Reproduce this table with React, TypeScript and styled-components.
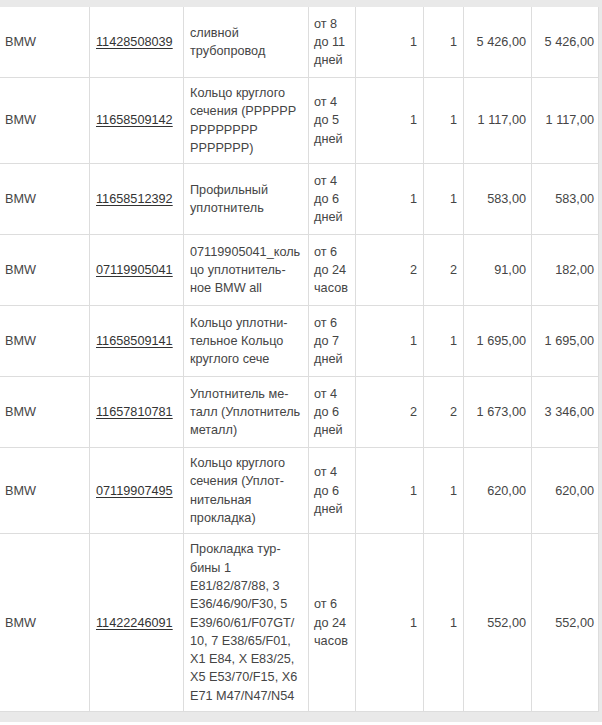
import React from "react";
import styled, { createGlobalStyle } from "styled-components";

const GlobalStyle = createGlobalStyle`
  html, body {
    margin: 0;
    padding: 0;
    background: #ffffff;
  }
  body {
    font-family: "Liberation Sans", Arial, sans-serif;
  }
`;

const Frame = styled.div`
  background: #e9e9e9;
  padding: 7px 3px 10px 0;
  width: 599px;
`;

const Table = styled.table`
  width: 599px;
  table-layout: fixed;
  border-collapse: separate;
  border-spacing: 0;
  background: #ffffff;
  font-family: "Liberation Sans", Arial, sans-serif;
  font-size: 12.7px;
  line-height: 18.3px;
  color: #454545;
`;

const Cell = styled.td<{ $align?: "left" | "right"; $padR?: number; $padL?: number }>`
  box-sizing: border-box;
  height: 71px;
  padding: 6px ${(p) => p.$padR ?? 6}px 6px ${(p) => p.$padL ?? 6}px;
  border-right: 1px solid #dddddd;
  border-bottom: 1px solid #dddddd;
  vertical-align: middle;
  text-align: ${(p) => p.$align ?? "left"};
  white-space: nowrap;
`;

const PartLink = styled.a`
  color: #333333;
  text-decoration: underline;
  text-underline-offset: 2px;
`;

const Lines = styled.span`
  display: block;
`;

type Row = {
  brand: string;
  code: string;
  name: string[];
  term: string[];
  qty: number;
  qty2: number;
  price: string;
  sum: string;
};

const rows: Row[] = [
  {
    brand: "BMW",
    code: "11428508039",
    name: ["сливной", "трубопровод"],
    term: ["от 8", "до 11", "дней"],
    qty: 1,
    qty2: 1,
    price: "5\u00a0426,00",
    sum: "5\u00a0426,00",
  },
  {
    brand: "BMW",
    code: "11658509142",
    name: ["Кольцо круглого", "сечения (PPPPPP", "PPPPPPPP", "PPPPPPP)"],
    term: ["от 4", "до 5", "дней"],
    qty: 1,
    qty2: 1,
    price: "1\u00a0117,00",
    sum: "1\u00a0117,00",
  },
  {
    brand: "BMW",
    code: "11658512392",
    name: ["Профильный", "уплотнитель"],
    term: ["от 4", "до 6", "дней"],
    qty: 1,
    qty2: 1,
    price: "583,00",
    sum: "583,00",
  },
  {
    brand: "BMW",
    code: "07119905041",
    name: ["07119905041_коль", "цо уплотнитель-", "ное BMW all"],
    term: ["от 6", "до 24", "часов"],
    qty: 2,
    qty2: 2,
    price: "91,00",
    sum: "182,00",
  },
  {
    brand: "BMW",
    code: "11658509141",
    name: ["Кольцо уплотни-", "тельное Кольцо", "круглого сече"],
    term: ["от 6", "до 7", "дней"],
    qty: 1,
    qty2: 1,
    price: "1\u00a0695,00",
    sum: "1\u00a0695,00",
  },
  {
    brand: "BMW",
    code: "11657810781",
    name: ["Уплотнитель ме-", "талл (Уплотнитель", "металл)"],
    term: ["от 4", "до 6", "дней"],
    qty: 2,
    qty2: 2,
    price: "1\u00a0673,00",
    sum: "3\u00a0346,00",
  },
  {
    brand: "BMW",
    code: "07119907495",
    name: ["Кольцо круглого", "сечения (Уплот-", "нительная", "прокладка)"],
    term: ["от 4", "до 6", "дней"],
    qty: 1,
    qty2: 1,
    price: "620,00",
    sum: "620,00",
  },
  {
    brand: "BMW",
    code: "11422246091",
    name: [
      "Прокладка тур-",
      "бины 1",
      "E81/82/87/88, 3",
      "E36/46/90/F30, 5",
      "E39/60/61/F07GT/",
      "10, 7 E38/65/F01,",
      "X1 E84, X E83/25,",
      "X5 E53/70/F15, X6",
      "E71 M47/N47/N54",
    ],
    term: ["от 6", "до 24", "часов"],
    qty: 1,
    qty2: 1,
    price: "552,00",
    sum: "552,00",
  },
];

const widths = [90, 94, 125, 47, 68, 40, 68, 67];

function MultiLine({ lines }: { lines: string[] }) {
  return (
    <Lines>
      {lines.map((l, i) => (
        <React.Fragment key={i}>
          {l}
          {i < lines.length - 1 && <br />}
        </React.Fragment>
      ))}
    </Lines>
  );
}

export default function App() {
  return (
    <>
      <GlobalStyle />
      <Frame>
        <Table>
          <colgroup>
            {widths.map((w, i) => (
              <col key={i} style={{ width: w }} />
            ))}
          </colgroup>
          <tbody>
            {rows.map((r) => (
              <tr key={r.code}>
                <Cell $padL={5}>{r.brand}</Cell>
                <Cell>
                  <PartLink href="#">{r.code}</PartLink>
                </Cell>
                <Cell>
                  <MultiLine lines={r.name} />
                </Cell>
                <Cell $padL={5}>
                  <MultiLine lines={r.term} />
                </Cell>
                <Cell $align="right">{r.qty}</Cell>
                <Cell $align="right">{r.qty2}</Cell>
                <Cell $align="right" $padR={5}>
                  {r.price}
                </Cell>
                <Cell $align="right" $padR={4}>
                  {r.sum}
                </Cell>
              </tr>
            ))}
          </tbody>
        </Table>
      </Frame>
    </>
  );
}
